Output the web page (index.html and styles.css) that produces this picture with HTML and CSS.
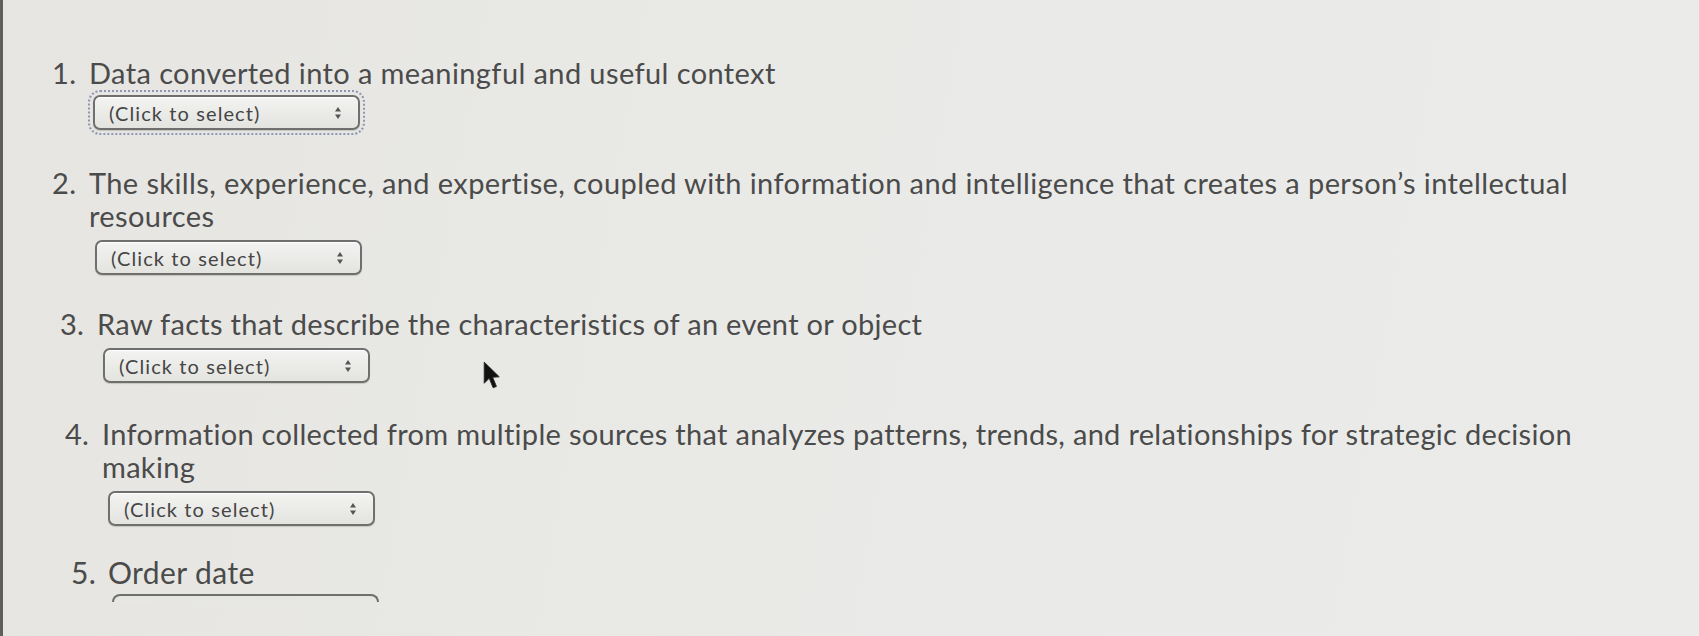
FILE: index.html
```html
<!DOCTYPE html>
<html lang="en">
<head>
<meta charset="utf-8">
<title>Questions</title>
<link rel="stylesheet" href="styles.css">
</head>
<body>
<div class="screen">
  <ol class="questions">
    <li class="q q1">
      <span class="num">1.</span>
      <div class="body">
        <p class="prompt">Data converted into a meaningful and useful context</p>
        <div class="select focused"><span>(Click to select)</span><svg class="arrows" viewBox="0 0 8 14" width="8" height="14"><path d="M4 1 L7 5.5 L1 5.5 Z M4 13 L7 8.5 L1 8.5 Z"/></svg></div>
      </div>
    </li>
    <li class="q q2">
      <span class="num">2.</span>
      <div class="body">
        <p class="prompt">The skills, experience, and expertise, coupled with information and intelligence that creates a person’s intellectual resources</p>
        <div class="select"><span>(Click to select)</span><svg class="arrows" viewBox="0 0 8 14" width="8" height="14"><path d="M4 1 L7 5.5 L1 5.5 Z M4 13 L7 8.5 L1 8.5 Z"/></svg></div>
      </div>
    </li>
    <li class="q q3">
      <span class="num">3.</span>
      <div class="body">
        <p class="prompt">Raw facts that describe the characteristics of an event or object</p>
        <div class="select"><span>(Click to select)</span><svg class="arrows" viewBox="0 0 8 14" width="8" height="14"><path d="M4 1 L7 5.5 L1 5.5 Z M4 13 L7 8.5 L1 8.5 Z"/></svg></div>
      </div>
    </li>
    <li class="q q4">
      <span class="num">4.</span>
      <div class="body">
        <p class="prompt">Information collected from multiple sources that analyzes patterns, trends, and relationships for strategic decision making</p>
        <div class="select"><span>(Click to select)</span><svg class="arrows" viewBox="0 0 8 14" width="8" height="14"><path d="M4 1 L7 5.5 L1 5.5 Z M4 13 L7 8.5 L1 8.5 Z"/></svg></div>
      </div>
    </li>
    <li class="q q5">
      <span class="num">5.</span>
      <div class="body">
        <p class="prompt">Order date</p>
        <div class="select-edge"></div>
      </div>
    </li>
  </ol>
  <svg class="cursor" viewBox="0 0 16 26" width="18" height="29"><path d="M1 1 L1 20 L5.5 15.5 L9 24 L12 22.8 L8.6 14.6 L14.5 14.2 Z" fill="#111" stroke="#2a2a2a" stroke-width="0.8"/></svg>
</div>
</body>
</html>
```
FILE: styles.css
```css
html, body {
  margin: 0;
  padding: 0;
  height: 100%;
  overflow: hidden;
}
body {
  background: linear-gradient(100deg, #e6e5e1 0%, #e9e9e6 40%, #eaebe9 70%, #ebecea 100%);
  font-family: Lato, "Open Sans", sans-serif;
  color: #4b4b4b;
}
.screen {
  position: relative;
  height: 636px;
  border-left: 3px solid #5e5e5c;
  box-sizing: border-box;
}
.questions {
  list-style: none;
  margin: 0;
  padding: 56px 0 0 0;
  display: flex;
  flex-direction: column;
}
.q {
  display: flex;
  align-items: flex-start;
  font-size: 29px;
  letter-spacing: 0.4px;
}
.num {
  width: 37px;
  flex: none;
  line-height: 33px;
}
.body {
  display: flex;
  flex-direction: column;
  align-items: flex-start;
}
.prompt {
  margin: 0;
  line-height: 33px;
  max-width: 1545px;
}
.select {
  margin-top: 8px;
  margin-left: 6px;
  width: 267px;
  height: 35px;
  box-sizing: border-box;
  border: 2px solid #6f6f6f;
  border-radius: 7px;
  background: linear-gradient(#f3f3f1, #e3e3e0);
  box-shadow: inset 0 1px 1px #fff, 0 1px 1px rgba(0,0,0,0.15);
  display: flex;
  align-items: center;
  justify-content: space-between;
  padding: 0 16px 0 14px;
  font-size: 20px;
  letter-spacing: 1.1px;
  color: #454545;
}
.arrows path { fill: #555; }
.select.focused {
  margin-top: 6px;
  margin-left: 4px;
  outline: 2px dotted #8d97b5;
  outline-offset: 3px;
}
.select-edge {
  margin-top: 5px;
  margin-left: 4px;
  width: 267px;
  height: 8px;
  box-sizing: border-box;
  border: 2px solid #6f6f6f;
  border-bottom: none;
  border-radius: 8px 8px 0 0;
  background: linear-gradient(#e4e4e1, #e8e8e5);
}
.q1 { margin-left: 49px; }
.q2 { margin-left: 49px; margin-top: 36px; }
.q3 { margin-left: 57px; margin-top: 32px; letter-spacing: 0.3px; }
.q4 { margin-left: 62px; margin-top: 34px; letter-spacing: 0.3px; }
.q5 { margin-left: 68px; margin-top: 30px; font-size: 30px; }
.cursor {
  position: absolute;
  left: 480px;
  top: 361px;
}
```
